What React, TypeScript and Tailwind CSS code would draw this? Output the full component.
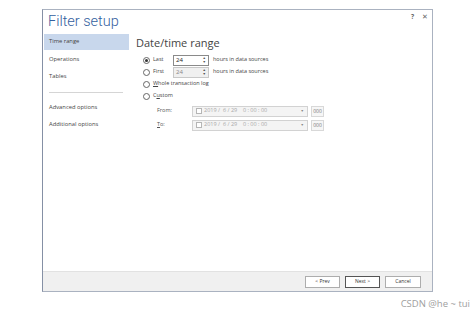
import React from "react";

function Radio({ checked }: { checked?: boolean }) {
  return (
    <span className="w-[7px] h-[7px] rounded-full border border-[#666] bg-white flex items-center justify-center shrink-0">
      {checked && <span className="w-[3px] h-[3px] rounded-full bg-[#333]" />}
    </span>
  );
}

function Spin({ disabled }: { disabled?: boolean }) {
  return (
    <div
      className={`w-[36px] h-[11px] border ${disabled ? "border-[#c8c8c8] bg-[#f0f0f0] text-[#888]" : "border-[#8a8a8a] bg-white text-[#222]"} flex items-center justify-between pl-[2px] pr-[2px] text-[6px] leading-none`}
    >
      <span>24</span>
      <span className="flex flex-col items-center text-[3.5px] leading-[4px] text-[#555]">
        <span>▲</span>
        <span>▼</span>
      </span>
    </div>
  );
}

function DateBox() {
  return (
    <div className="flex items-center gap-[3px]">
      <div className="w-[116px] h-[11px] border border-[#d2d2d2] bg-[#f4f4f4] flex items-center pl-[3px] pr-[3px] text-[5.5px] text-[#a8a8a8] leading-none">
        <span className="w-[6px] h-[6px] border border-[#b5b5b5] bg-white mr-[2px]" />
        <span className="whitespace-pre">2019 /  6 / 29    0 : 00 : 00</span>
        <span className="ml-auto text-[3.5px] text-[#888]">▼</span>
      </div>
      <div className="w-[13px] h-[11px] border border-[#d8d8d8] bg-[#f6f6f6] flex items-center justify-center text-[5px] text-[#777] leading-none">
        000
      </div>
    </div>
  );
}

export default function App() {
  return (
    <div className="w-[474px] h-[311px] bg-white relative overflow-hidden font-['Open_Sans',sans-serif]">
      <div className="pt-[9px] pl-[42px]">
        <div className="w-[391px] h-[283px] border border-[#aab2c0] border-l-[#8590a5] bg-white flex flex-col">
          {/* title bar */}
          <div className="h-[24px] flex items-start justify-between pl-[5px] pr-[4px]">
            <span className="font-['Roboto',sans-serif] text-[14.5px] leading-none mt-[5px] text-[#33609e] font-light">
              Filter setup
            </span>
            <div className="flex gap-[8px] mt-[4px] text-[6.5px] text-[#666] leading-none">
              <span className="font-bold">?</span>
              <span>✕</span>
            </div>
          </div>
          {/* body */}
          <div className="flex flex-1">
            {/* sidebar */}
            <div className="w-[86px] pl-[1px] flex flex-col text-[5.8px] text-[#444] leading-none">
              <div className="h-[16px] bg-[#c8d7ec] flex items-center pl-[5px]">Time range</div>
              <div className="h-[17px] flex items-center pl-[5px] mt-[1px]">Operations</div>
              <div className="h-[17px] flex items-center pl-[5px]">Tables</div>
              <div className="h-px bg-[#d5d5d5] ml-[5px] mt-[7px] mb-[6px] mr-[6px]" />
              <div className="h-[17px] flex items-center pl-[5px]">Advanced options</div>
              <div className="h-[17px] flex items-center pl-[5px]">Additional options</div>
            </div>
            {/* content */}
            <div className="flex-1 pl-[7px] pt-[3px] flex flex-col text-[5.5px] text-[#444] leading-none">
              <div className="text-[11px] text-[#444] leading-none mb-[6px]">Date/time range</div>
              <div className="pl-[7px] flex flex-col">
                <div className="h-[12px] flex items-center">
                  <Radio checked />
                  <span className="ml-[3px] w-[20px]">Last</span>
                  <Spin />
                  <span className="ml-[4px]">hours in data sources</span>
                </div>
                <div className="h-[12px] flex items-center">
                  <Radio />
                  <span className="ml-[3px] w-[20px]">First</span>
                  <Spin disabled />
                  <span className="ml-[4px]">hours in data sources</span>
                </div>
                <div className="h-[12px] flex items-center">
                  <Radio />
                  <span className="ml-[3px]">
                    <span className="underline">W</span>hole transaction log
                  </span>
                </div>
                <div className="h-[12px] flex items-center">
                  <Radio />
                  <span className="ml-[3px]">
                    C<span className="underline">u</span>stom
                  </span>
                </div>
                <div className="h-[14px] flex items-center pl-[14px] mt-[2px]">
                  <span className="w-[35px] text-[#555]">From:</span>
                  <DateBox />
                </div>
                <div className="h-[14px] flex items-center pl-[14px]">
                  <span className="w-[35px] text-[#555]">
                    <span className="underline">T</span>o:
                  </span>
                  <DateBox />
                </div>
              </div>
            </div>
          </div>
          {/* footer */}
          <div className="h-[20px] bg-[#f0f0f0] border-t border-[#e2e2e2] flex items-center justify-end gap-[5px] pr-[11px]">
            <div className="w-[35px] h-[12px] border border-[#adadad] bg-white flex items-center justify-center text-[5px] text-[#333] leading-none">
              &lt; Prev
            </div>
            <div className="w-[35px] h-[12px] border border-[#555] bg-white flex items-center justify-center text-[5px] text-[#333] leading-none">
              Next &gt;
            </div>
            <div className="w-[36px] h-[12px] border border-[#adadad] bg-white flex items-center justify-center text-[5px] text-[#333] leading-none">
              Cancel
            </div>
          </div>
        </div>
      </div>
      <div className="absolute right-[4px] bottom-[3px] text-[9.5px] text-[#a0a0a0] leading-none">
        CSDN @he ~ tui
      </div>
    </div>
  );
}
